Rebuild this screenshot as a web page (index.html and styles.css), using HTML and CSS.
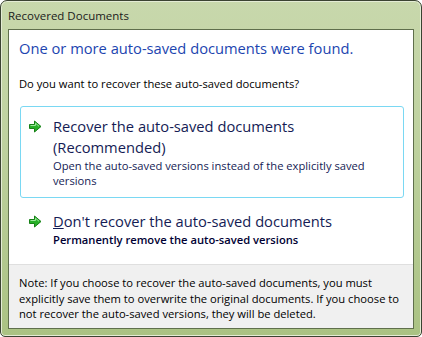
FILE: index.html
```html
<!DOCTYPE html>
<html lang="en">
<head>
    <meta charset="UTF-8">
    <title>Recovered Documents</title>
    <link rel="stylesheet" href="styles.css">
</head>
<body>
    <div class="window">
        <div class="title-bar">Recovered Documents</div>

        <div class="client">
            <div class="content">
                <div class="main-instruction">One or more auto-saved documents were found.</div>
                <div class="question">Do you want to recover these auto-saved documents?</div>

                <div class="command-link hover">
                    <svg class="arrow" width="14" height="13" viewBox="0 0 14 13">
                        <path d="M1.5 4.5 H6.5 V1 L13 6.5 L6.5 12 V8.5 H1.5 Z" fill="#27b027" stroke="#168016" stroke-width="1" stroke-linejoin="round"/>
                        <path d="M2.5 5.5 H7.5 V3.2 L11 6.3" fill="none" stroke="#9be89b" stroke-width="1"/>
                    </svg>
                    <div class="link-text">
                        <div class="link-title">Recover the auto-saved documents (Recommended)</div>
                        <div class="link-desc">Open the auto-saved versions instead of the explicitly saved versions</div>
                    </div>
                </div>

                <div class="command-link">
                    <svg class="arrow" width="14" height="13" viewBox="0 0 14 13">
                        <path d="M1.5 4.5 H6.5 V1 L13 6.5 L6.5 12 V8.5 H1.5 Z" fill="#27b027" stroke="#168016" stroke-width="1" stroke-linejoin="round"/>
                        <path d="M2.5 5.5 H7.5 V3.2 L11 6.3" fill="none" stroke="#9be89b" stroke-width="1"/>
                    </svg>
                    <div class="link-text">
                        <div class="link-title"><u>D</u>on't recover the auto-saved documents</div>
                        <div class="link-desc bold">Permanently remove the auto-saved versions</div>
                    </div>
                </div>
            </div>

            <div class="note">
                Note: If you choose to recover the auto-saved documents, you must explicitly save them to overwrite the original documents. If you choose to not recover the auto-saved versions, they will be deleted.
            </div>
        </div>
    </div>
</body>
</html>
```

FILE: styles.css
```css
body {
    margin: 0;
    padding: 0;
    background: #ffffff;
    font-family: 'Open Sans', 'Noto Sans', sans-serif;
}

.window {
    width: 422px;
    height: 337px;
    box-sizing: border-box;
    border: 1px solid #3b4332;
    border-radius: 7px 7px 5px 5px;
    background: linear-gradient(180deg, #c8d8ac 0%, #bfd2a0 40%, #aac283 100%);
    box-shadow: inset 0 0 0 1px #e4ecd5;
    display: flex;
    flex-direction: column;
    padding: 0 7px 7px 7px;
}

.title-bar {
    height: 28px;
    line-height: 30px;
    font-size: 11.5px;
    color: #1b1b1b;
    flex-shrink: 0;
}

.client {
    flex: 1;
    border: 1px solid #5f6f4c;
    background: #f0f0f0;
    display: flex;
    flex-direction: column;
}

.content {
    background: #ffffff;
    padding: 8px 9px 0 10px;
    height: 235px;
    box-sizing: border-box;
    border-bottom: 1px solid #dfdfdf;
}

.main-instruction {
    font-size: 14.7px;
    line-height: 20px;
    color: #1c45b0;
}

.question {
    font-size: 11.2px;
    line-height: 16px;
    color: #000000;
    margin-top: 18px;
}

.command-link {
    display: flex;
    gap: 11px;
    margin-top: 14px;
    margin-left: 1px;
    padding: 9px 10px 9px 7px;
    border: 1px solid transparent;
    border-radius: 3px;
}

.command-link + .command-link {
    margin-top: 3px;
}

.command-link.hover {
    border-color: #7ad8f3;
    background: #ffffff;
}

.arrow {
    flex-shrink: 0;
    margin-top: 4px;
}

.link-title {
    font-size: 14.7px;
    line-height: 21px;
    color: #151c55;
}

.link-desc {
    font-size: 11.2px;
    line-height: 15px;
    color: #151c55;
}

.link-desc.bold {
    font-weight: 600;
    color: #000033;
}

.note {
    padding: 10px 10px 0 10px;
    font-size: 11.2px;
    line-height: 15.5px;
    color: #000000;
}
```
